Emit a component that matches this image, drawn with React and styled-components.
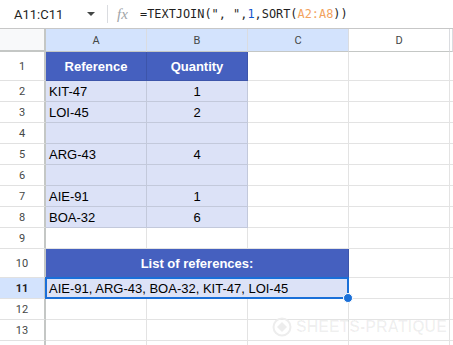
import styled, { createGlobalStyle } from 'styled-components';

const GlobalStyle = createGlobalStyle`
  body {
    margin: 0;
    background: #ffffff;
    font-family: 'Liberation Sans', Arial, sans-serif;
  }
`;

const COLS = '46px 101px 101px 101px 101px 1fr';

const App = () => {
  const rows = [
    { n: 1, h: 29, a: 'Reference', b: 'Quantity', kind: 'head' },
    { n: 2, h: 21, a: 'KIT-47', b: '1', kind: 'data' },
    { n: 3, h: 21, a: 'LOI-45', b: '2', kind: 'data' },
    { n: 4, h: 21, a: '', b: '', kind: 'data' },
    { n: 5, h: 21, a: 'ARG-43', b: '4', kind: 'data' },
    { n: 6, h: 21, a: '', b: '', kind: 'data' },
    { n: 7, h: 21, a: 'AIE-91', b: '1', kind: 'data' },
    { n: 8, h: 21, a: 'BOA-32', b: '6', kind: 'data' },
    { n: 9, h: 21, kind: 'empty' },
  ];

  return (
    <>
      <GlobalStyle />
      <FormulaBar>
        <NameBox>A11:C11</NameBox>
        <Caret />
        <Divider />
        <Fx>fx</Fx>
        <Formula>
          =TEXTJOIN(", ",<Num>1</Num>,SORT(<Range>A2:A8</Range>))
        </Formula>
      </FormulaBar>

      <Sheet>
        <Row $h={23}>
          <Corner />
          {['A', 'B', 'C', 'D'].map((c) => (
            <ColHead key={c} $active={c !== 'D'}>
              {c}
            </ColHead>
          ))}
          <ColHead />
        </Row>

        {rows.map((r) => (
          <Row key={r.n} $h={r.h}>
            <RowHead>{r.n}</RowHead>
            {r.kind === 'empty' ? (
              <Cell />
            ) : (
              <Cell $fill={r.kind} $bold={r.kind === 'head'} $center={r.kind === 'head'}>
                {r.a}
              </Cell>
            )}
            {r.kind === 'empty' ? (
              <Cell />
            ) : (
              <Cell $fill={r.kind} $bold={r.kind === 'head'} $center>
                {r.b}
              </Cell>
            )}
            <Cell />
            <Cell />
            <Cell />
          </Row>
        ))}

        <Row $h={29}>
          <RowHead>10</RowHead>
          <Cell $span={3} $fill="head" $bold $center>
            List of references:
          </Cell>
          <Cell />
          <Cell />
        </Row>

        <Row $h={21}>
          <RowHead $active>11</RowHead>
          <Cell $span={3} $fill="data">
            AIE-91, ARG-43, BOA-32, KIT-47, LOI-45
            <Selection />
            <Handle />
          </Cell>
          <Cell />
          <Cell />
        </Row>

        {[12, 13, ''].map((n, i) => (
          <Row key={i} $h={21}>
            <RowHead>{n}</RowHead>
            <Cell />
            <Cell />
            <Cell />
            <Cell />
            <Cell />
          </Row>
        ))}

        <Watermark>
          <WatermarkLogo viewBox="0 0 20 20">
            <circle cx="10" cy="10" r="8.5" fill="none" stroke="#ededed" strokeWidth="2" />
            <path d="M5 10 L10 5 L15 10 L10 15 Z" fill="#ededed" />
          </WatermarkLogo>
          SHEETS-PRATIQUE
        </Watermark>
      </Sheet>
    </>
  );
};

const FormulaBar = styled.div`
  display: flex;
  align-items: center;
  height: 28px;
  border-bottom: 1px solid #c7c7c7;
  color: #202124;
`;

const NameBox = styled.div`
  width: 72px;
  padding-left: 14px;
  font-family: Roboto, 'Liberation Sans', sans-serif;
  font-size: 13px;
  color: #1f1f1f;
`;

const Caret = styled.div`
  width: 0;
  height: 0;
  border-left: 4px solid transparent;
  border-right: 4px solid transparent;
  border-top: 4px solid #444746;
  margin-left: 1px;
`;

const Divider = styled.div`
  width: 1px;
  height: 18px;
  background: #dadce0;
  margin: 0 9px 0 12px;
`;

const Fx = styled.div`
  font-family: 'Liberation Serif', 'Times New Roman', serif;
  font-style: italic;
  font-size: 15px;
  color: #a0a4a8;
  width: 23px;
`;

const Formula = styled.div`
  font-family: 'DejaVu Sans Mono', 'Liberation Mono', monospace;
  font-size: 11.9px;
  color: #1f1f1f;
  white-space: pre;
`;

const Num = styled.span`
  color: #1155cc;
`;

const Range = styled.span`
  color: #f3a35e;
`;

const Sheet = styled.div`
  position: relative;
  overflow: hidden;
`;

const Row = styled.div`
  display: grid;
  grid-template-columns: ${COLS};
  height: ${(p) => p.$h}px;
`;

const Corner = styled.div`
  background: #f8f9fa;
  border-right: 2px solid #c4c7c5;
  border-bottom: 2px solid #c4c7c5;
`;

const ColHead = styled.div`
  display: flex;
  align-items: center;
  justify-content: center;
  background: ${(p) => (p.$active ? '#d3e3fd' : '#ffffff')};
  border-right: 1px solid #dadce0;
  border-bottom: 1px solid #c4c7c5;
  font-family: Roboto, 'Liberation Sans', sans-serif;
  font-size: 11px;
  color: #444746;
`;

const RowHead = styled.div`
  display: flex;
  align-items: center;
  justify-content: center;
  background: ${(p) => (p.$active ? '#d3e3fd' : '#ffffff')};
  border-right: 2px solid #c4c7c5;
  border-bottom: 1px solid #e1e1e1;
  font-family: Roboto, 'Liberation Sans', sans-serif;
  font-size: 11px;
  font-weight: ${(p) => (p.$active ? 700 : 400)};
  color: ${(p) => (p.$active ? '#1f1f1f' : '#444746')};
`;

const fills = {
  head: '#4560bf',
  data: '#dce2f7',
};

const Cell = styled.div`
  position: relative;
  display: flex;
  align-items: center;
  justify-content: ${(p) => (p.$center ? 'center' : 'flex-start')};
  grid-column: span ${(p) => p.$span || 1};
  padding: 1px 3px 0;
  background: ${(p) => fills[p.$fill] || '#ffffff'};
  border-right: 1px solid rgba(0, 0, 0, 0.11);
  border-bottom: 1px solid rgba(0, 0, 0, 0.11);
  font-size: 13px;
  font-weight: ${(p) => (p.$bold ? 700 : 400)};
  color: ${(p) => (p.$fill === 'head' ? '#ffffff' : '#000000')};
  white-space: nowrap;
`;

const Selection = styled.div`
  position: absolute;
  left: -1px;
  top: -1px;
  right: -1px;
  bottom: -1px;
  border: 2px solid #1a6fd8;
  pointer-events: none;
`;

const Handle = styled.div`
  position: absolute;
  right: -5px;
  bottom: -5px;
  width: 8px;
  height: 8px;
  border-radius: 50%;
  background: #1a6fd8;
  border: 1px solid #ffffff;
  z-index: 2;
`;

const Watermark = styled.div`
  position: absolute;
  left: 272px;
  top: 288px;
  display: flex;
  align-items: center;
  gap: 4px;
  font-size: 16px;
  font-weight: 700;
  white-space: nowrap;
  color: rgba(0, 0, 0, 0.06);
  pointer-events: none;
`;

const WatermarkLogo = styled.svg`
  width: 20px;
  height: 20px;
`;

export default App;
